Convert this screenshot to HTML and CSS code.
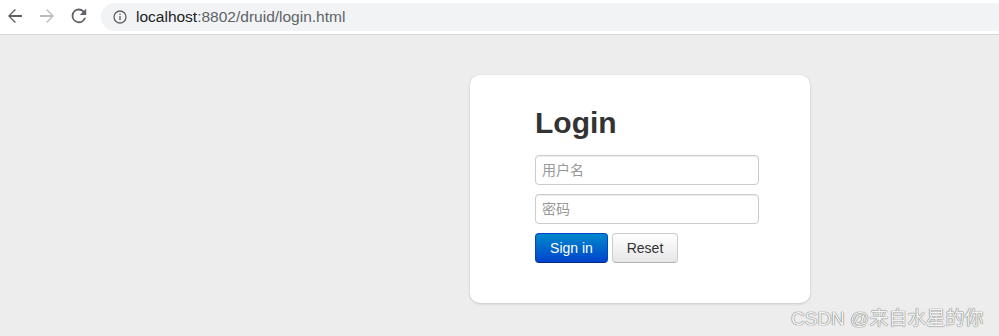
FILE: index.html
```html
<!DOCTYPE html>
<html lang="zh">
<head>
<meta charset="utf-8">
<title>druid login</title>
<link rel="stylesheet" href="styles.css">
</head>
<body>
<header class="toolbar">
  <div class="nav">
    <svg class="nav-icon" width="16" height="16" viewBox="0 0 16 16"><path d="M15 7.1H3.8l5.1-5.1L7.9 1 1 8l6.9 7 1-1-5.1-5.1H15z" fill="#5f6368"/></svg>
    <svg class="nav-icon" width="16" height="16" viewBox="0 0 16 16"><path d="M1 7.1h11.2L7.1 2l1-1L15 8l-6.9 7-1-1 5.1-5.1H1z" fill="#babcbe"/></svg>
    <svg class="nav-icon" width="16" height="16" viewBox="0 0 16 16"><path d="M13.6 2.4A7.9 7.9 0 0 0 8 0.1a7.9 7.9 0 1 0 7.7 9.9h-2.1A5.9 5.9 0 1 1 8 2.1a5.8 5.8 0 0 1 4.2 1.8L9 7.1h7V0.1z" fill="#5f6368" transform="translate(0.5 0.5) scale(0.92)"/></svg>
  </div>
  <div class="omnibox">
    <svg class="info" width="14" height="14" viewBox="0 0 14 14"><circle cx="7" cy="7" r="6" fill="none" stroke="#5f6368" stroke-width="1.3"/><rect x="6.35" y="6" width="1.3" height="4.2" fill="#5f6368"/><rect x="6.35" y="3.6" width="1.3" height="1.3" fill="#5f6368"/></svg>
    <span class="url"><span class="host">localhost</span>:8802/druid/login.html</span>
  </div>
</header>
<main class="page">
  <form class="card">
    <h2 class="title">Login</h2>
    <input class="field" type="text" placeholder="用户名">
    <input class="field" type="password" placeholder="密码">
    <div class="actions">
      <button class="btn btn-primary" type="button">Sign in</button>
      <button class="btn btn-default" type="button">Reset</button>
    </div>
  </form>
</main>
<div class="watermark">CSDN @来自水星的你</div>
</body>
</html>
```

FILE: styles.css
```css
* { box-sizing: border-box; }
html, body { margin: 0; height: 100%; }
body {
  background: #ededed;
  font-family: "Liberation Sans", Arial, "Noto Sans CJK SC", sans-serif;
  overflow: hidden;
  position: relative;
}
.toolbar {
  height: 35px;
  background: #fff;
  border-bottom: 1px solid #d6d6d6;
  display: flex;
  align-items: flex-start;
}
.nav {
  display: flex;
  gap: 16px;
  padding: 8px 0 0 7px;
  width: 101px;
}
.nav-icon { display: block; }
.omnibox {
  margin-top: 3px;
  height: 28px;
  flex: 1;
  margin-right: -20px;
  background: #f1f3f4;
  border-radius: 14px;
  display: flex;
  align-items: center;
  padding-left: 12px;
}
.info { margin-right: 9px; }
.url {
  font-size: 15.5px;
  color: #5f6368;
}
.host { color: #202124; }
.page {
  padding-top: 40px;
}
.card {
  margin: 0 0 0 470px;
  width: 340px;
  height: 228px;
  background: #fff;
  border-radius: 10px;
  box-shadow: 0 1px 3px rgba(0,0,0,0.16);
  padding: 28px 0 0 65px;
  display: flex;
  flex-direction: column;
  align-items: flex-start;
}
.title {
  margin: 0 0 12px;
  font-size: 30px;
  line-height: 40px;
  font-weight: bold;
  color: #333;
}
.field {
  width: 224px;
  height: 30px;
  margin: 0 0 9px;
  padding: 4px 6px;
  border: 1px solid #ccc;
  border-radius: 4px;
  font-family: "Liberation Sans", "Noto Sans CJK SC", sans-serif;
  font-size: 14px;
  color: #555;
  box-shadow: inset 0 1px 1px rgba(0,0,0,0.075);
}
.field::placeholder { color: #999; }
.actions {
  display: flex;
  gap: 4px;
}
.btn {
  height: 30px;
  padding: 4px 12px;
  font-family: "Liberation Sans", Arial, sans-serif;
  font-size: 14px;
  line-height: 20px;
  border-radius: 4px;
  border: 1px solid #bbb;
  cursor: pointer;
}
.btn-primary {
  width: 73px;
  color: #fff;
  background: linear-gradient(to bottom, #0088cc, #0044cc);
  border-color: #0044cc #0044cc #002a80;
}
.btn-default {
  width: 66px;
  color: #333;
  background: linear-gradient(to bottom, #ffffff, #e6e6e6);
  border-color: #ccc #ccc #b3b3b3;
}
.watermark {
  position: absolute;
  left: 791px;
  top: 303px;
  font-family: "Liberation Sans", "Noto Sans CJK SC", sans-serif;
  font-size: 19px;
  color: #f2f2f2;
  text-shadow: 0 0 1px #6e6e6e, 0 0 1px #6e6e6e;
  white-space: nowrap;
}
```
